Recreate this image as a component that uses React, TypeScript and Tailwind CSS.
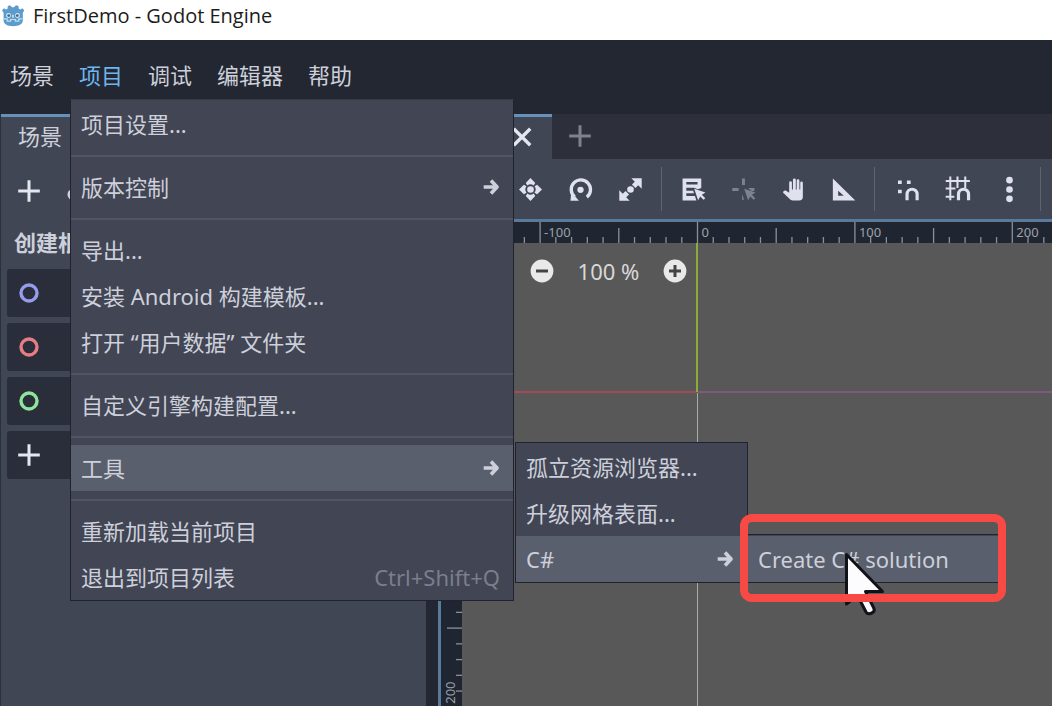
import { useEffect, useRef, useState } from "react";
import type { ReactNode } from "react";

type IconProps = { className?: string; children: ReactNode; box?: string };

function Icon({ className = "size-6", children, box = "0 0 16 16" }: IconProps) {
  return (
    <svg viewBox={box} className={`shrink-0 ${className}`} fill="currentColor" aria-hidden="true">
      {children}
    </svg>
  );
}

function PlusIcon({ className }: { className?: string }) {
  return (
    <Icon className={className}>
      <path d="M7 .8v6.2H.8v2H7v6.2h2V9h6.200V7H9V.8z" />
    </Icon>
  );
}

function ArrowIcon() {
  return (
    <Icon className="size-[18px]">
      <path
        d="M1.500 8H12M8 2.200 13.400 8 8 13.800"
        fill="none"
        stroke="currentColor"
        strokeWidth="3.200"
        strokeLinejoin="round"
      />
    </Icon>
  );
}

function GodotLogo() {
  return (
    <svg viewBox="0 0 24 24" className="size-6 shrink-0" aria-hidden="true">
      <path
        d="M9 1.200 11 3.200h2L15 1.200l2.500.9.3 2.600 1.600.8 2-1.200 1.900 2.200-1.500 2.300v7.700c0 3.800-4.300 5.700-9.600 5.700s-9.600-1.900-9.600-5.700V8.800L1 6.500l2-2.200 2 1.200 1.500-.8.3-2.600z"
        fill="#5b9ccc"
      />
      <path d="M2.800 14.800h3.400v2.400h3.400v-1.700h4.800v1.700h3.400v-2.400h3.400" fill="none" stroke="#c4deef" strokeWidth="1.200" />
      <circle cx="7.500" cy="11.500" r="2.400" fill="#dcebf5" />
      <circle cx="16.500" cy="11.500" r="2.400" fill="#dcebf5" />
      <circle cx="7.700" cy="11.600" r="1.400" fill="#47647d" />
      <circle cx="16.300" cy="11.600" r="1.400" fill="#47647d" />
      <path d="M12 10.800v3" stroke="#dcebf5" strokeWidth="1.400" />
    </svg>
  );
}

const moveHead = "M8 0 11.300 3.400 10.200 5.200Q8 3.500 5.800 5.200L4.700 3.400z";
const pointer = "m8.500 7.500 2.700 8 1.500-2.700 2.300 2.400 1.200-1.200-2.400-2.300 2.500-1.600z";
const magnet = (
  <path d="M6.300 15.500v-4.200a3.500 3.500 0 0 1 7 0v4.200" fill="none" stroke="currentColor" strokeWidth="2.200" />
);

const transformTools = [
  {
    label: "选择模式",
    art: <path d="M2 1v13l3.500-3.500L8 15l2-1-2.500-4.500H13z" />,
  },
  {
    label: "移动模式",
    art: (
      <>
        <circle cx="8" cy="8" r="2.300" />
        <path d={moveHead} />
        <path d={moveHead} transform="rotate(90 8 8)" />
        <path d={moveHead} transform="rotate(180 8 8)" />
        <path d={moveHead} transform="rotate(270 8 8)" />
      </>
    ),
  },
  {
    label: "旋转模式",
    art: (
      <>
        <circle cx="8" cy="8.200" r="2.200" />
        <path d="M4 13.200A6.700 6.700 0 1 1 12.400 13.300" fill="none" stroke="currentColor" strokeWidth="2.300" />
        <path d="M1 15.800 1.600 9.600 6.900 15.800z" />
      </>
    ),
  },
  {
    label: "缩放模式",
    art: (
      <>
        <circle cx="8" cy="8" r="2.300" />
        <path d="M8.600.2H15.800V7.400L13.400 5l-2 2L9 4.600l2-2z" />
        <path d="M7.400 15.800H.2V8.600L2.600 11l2-2L7 11.400l-2 2z" />
      </>
    ),
  },
];

const selectTools = [
  {
    label: "列表选择",
    art: (
      <>
        <path
          fillRule="evenodd"
          d="M.4.400H13.400V7L11 7.800 8.400 6.800H3v2h4.800l.5 1.800H3v2h6l1 3H.4zM3 2.800v1.800h7.800V2.800z"
        />
        <path d={pointer} />
      </>
    ),
  },
  {
    label: "轴心点",
    dim: true,
    art: (
      <>
        <path d="M7 .4h2v4.400H7zM.2 7h4.400v2H.2zM7 11.200l1.400 4H7zM11.200 7h4.400v2h-2z" />
        <path d={pointer} />
      </>
    ),
  },
  {
    label: "平移模式",
    art: (
      <path d="M5 3.200a.9.900 0 0 1 1.900 0V8h.7V1.300a1 1 0 0 1 2 0V8h.6V1.800a.9.900 0 0 1 1.900 0V8h.6V3.400a.9.900 0 0 1 1.800 0V13a2.600 2.600 0 0 1-2.600 2.600H7.600C5.500 15.600 3.300 12 .9 10.400c-.6-.9 1-2 2-1.500L5 10.200z" />
    ),
  },
  {
    label: "标尺模式",
    art: <path fillRule="evenodd" d="M.6.400v15.200h15.600zM4.300 8.800l3.900 3.600H4.300z" />,
  },
];

const snapTools = [
  {
    label: "智能吸附",
    art: (
      <>
        <path d="M0 1.800h2.600v2.400H0zM6.200 1.800h2.600v2.400H6.200zM0 8.200h2.600v2.400H0z" />
        {magnet}
      </>
    ),
  },
  {
    label: "栅格吸附",
    art: (
      <g transform="translate(-1 0)">
        <path
          d="M2.600-1v16.500M7.600-1v8M13-1v8M-.6 2.100h16.800M-.6 7.300h6.800M-.6 13h6"
          fill="none"
          stroke="currentColor"
          strokeWidth="1.400"
        />
        <g transform="translate(2 0)">{magnet}</g>
      </g>
    ),
  },
  {
    label: "吸附选项",
    art: (
      <>
        <circle cx="8" cy="1.500" r="2.300" />
        <circle cx="8" cy="8" r="2.300" />
        <circle cx="8" cy="14.500" r="2.300" />
      </>
    ),
  },
];

type Tool = { label: string; art: ReactNode; dim?: boolean };

function ToolGroup({ tools }: { tools: Tool[] }) {
  return (
    <div className="flex">
      {tools.map((t) => (
        <button
          key={t.label}
          type="button"
          aria-label={t.label}
          className={`flex h-12 w-[50px] items-center justify-center ${t.dim ? "text-[#7e8290]" : "text-[#dfe2ee]"}`}
        >
          <Icon className="size-[23px] overflow-visible">{t.art}</Icon>
        </button>
      ))}
    </div>
  );
}

function ToolSeparator() {
  return <span className="mx-[6px] h-11 w-px shrink-0 bg-[#606472]" />;
}

type Entry = {
  label: string;
  shortcut?: string;
  active?: boolean;
  submenu?: ReactNode;
  arrow?: boolean;
};

function MenuItem({ label, shortcut, active, submenu, arrow }: Entry) {
  return (
    <li className="relative">
      <button
        type="button"
        className={`flex h-[46px] w-full items-center justify-between pr-[13px] pl-[10px] text-left whitespace-nowrap ${
          active ? "bg-[#595f6c]" : ""
        }`}
      >
        <span>{label}</span>
        {shortcut && <span className="text-[#7b7f8b]">{shortcut}</span>}
        {arrow && <ArrowIcon />}
      </button>
      {submenu}
    </li>
  );
}

function Divider() {
  return (
    <li role="separator" className="flex h-[17px] items-center">
      <span className="h-[2px] w-full bg-[#505563]" />
    </li>
  );
}

const panel = "absolute border border-[#20232f] bg-[#414554] text-[#cdd0da]";

function CSharpMenu() {
  return (
    <ul className={`${panel} -top-[2px] left-full w-[254px] pt-px`}>
      <MenuItem label="Create C# solution" active />
    </ul>
  );
}

function ToolsMenu() {
  return (
    <ul className={`${panel} -top-[3px] left-full ml-[2px] w-[233px] pt-px`}>
      <MenuItem label="孤立资源浏览器..." />
      <MenuItem label="升级网格表面..." />
      <MenuItem label="C#" active arrow submenu={<CSharpMenu />} />
    </ul>
  );
}

function ProjectMenu() {
  return (
    <ul className={`${panel} top-[59px] left-[70px] z-10 w-[444px] border-t-[#353a47] pt-px`}>
      <MenuItem label="项目设置..." />
      <Divider />
      <MenuItem label="版本控制" arrow />
      <Divider />
      <MenuItem label="导出..." />
      <MenuItem label="安装 Android 构建模板..." />
      <MenuItem label="打开 “用户数据” 文件夹" />
      <Divider />
      <MenuItem label="自定义引擎构建配置..." />
      <Divider />
      <MenuItem label="工具" active arrow submenu={<ToolsMenu />} />
      <Divider />
      <MenuItem label="重新加载当前项目" />
      <MenuItem label="退出到项目列表" shortcut="Ctrl+Shift+Q" />
    </ul>
  );
}

const rootTypes = [
  { label: "2D 场景", ring: "#969cec" },
  { label: "3D 场景", ring: "#e77d84" },
  { label: "用户界面", ring: "#8fe39b" },
];

function SceneDock() {
  return (
    <aside className="flex w-[426px] shrink-0 flex-col border-l border-[#2b303c] bg-[#414655]">
      <div className="flex h-[45px] items-center border-t-[3px] border-[#6591ba] pb-1 pl-[17px] text-[#cdd0da]">
        场景
      </div>
      <div className="flex h-[64px] items-center gap-6 pl-[16px] text-[#e4e7f0]">
        <button type="button" aria-label="添加节点">
          <PlusIcon />
        </button>
        <button type="button" aria-label="实例化子场景" className="text-[#cdd0da]">
          <Icon>
            <path
              d="M7 5l2-2a3 3 0 0 1 4 4l-2 2M9 11l-2 2a3 3 0 0 1-4-4l2-2M6 10l4-4"
              fill="none"
              stroke="currentColor"
              strokeWidth="2"
            />
          </Icon>
        </button>
      </div>
      <h2 className="flex h-[46px] items-center pb-2 pl-[13px] font-bold text-[#cdd0da]">创建根节点：</h2>
      <div className="flex flex-col gap-[6px] px-[6px]">
        {rootTypes.map((t) => (
          <button
            key={t.label}
            type="button"
            aria-label={t.label}
            className="flex h-12 items-center rounded-[3px] bg-[#2a2e3a] pl-[10px]"
          >
            <Icon box="0 0 24 24">
              <circle cx="12" cy="12" r="8" fill="none" stroke={t.ring} strokeWidth="3.400" />
            </Icon>
          </button>
        ))}
        <button
          type="button"
          aria-label="其他节点"
          className="flex h-12 items-center rounded-[3px] bg-[#2a2e3a] pl-[10px] text-[#e4e7f0]"
        >
          <PlusIcon />
        </button>
      </div>
    </aside>
  );
}

const unit = 15.74;
const originX = 256.5;
const originY = 149;

function useExtent(axis: "width" | "height") {
  const ref = useRef<SVGSVGElement>(null);
  const [extent, setExtent] = useState(0);
  useEffect(() => {
    const node = ref.current;
    if (!node) return;
    const measure = () => setExtent(node.getBoundingClientRect()[axis]);
    measure();
    const observer = new ResizeObserver(measure);
    observer.observe(node);
    return () => observer.disconnect();
  }, [axis]);
  return [ref, extent] as const;
}

function ticksWithin(origin: number, extent: number) {
  const first = Math.ceil(-origin / unit);
  const last = Math.floor((extent - origin) / unit);
  return Array.from({ length: Math.max(0, last - first + 1) }, (_, i) => first + i);
}

function tickLength(n: number) {
  return n % 10 === 0 ? 21 : n % 5 === 0 ? 15 : 6;
}

function TopRuler() {
  const [ref, width] = useExtent("width");
  return (
    <svg ref={ref} className="h-[21px] w-full shrink-0 bg-[#202631]" aria-hidden="true">
      {ticksWithin(originX, width).map((n) => {
        const x = originX + n * unit;
        return (
          <g key={n}>
            <line x1={x} x2={x} y1={21 - tickLength(n)} y2={21} stroke="#8b909b" strokeWidth="1.300" />
            {n % 10 === 0 && (
              <text x={x + 4} y={15} fontSize={13} fill="#9da1aa">
                {n * 10}
              </text>
            )}
          </g>
        );
      })}
    </svg>
  );
}

function SideRuler() {
  const [ref, height] = useExtent("height");
  return (
    <svg ref={ref} className="h-full w-[21px] shrink-0 bg-[#202631]" aria-hidden="true">
      {ticksWithin(originY, height + unit).map((n) => {
        const y = originY + n * unit;
        return (
          <g key={n}>
            <line x1={21 - tickLength(n)} x2={21} y1={y} y2={y} stroke="#8b909b" strokeWidth="1.300" />
            {n % 10 === 0 && (
              <text transform={`translate(14 ${y - 3}) rotate(-90)`} fontSize={13} fill="#9da1aa">
                {n * 10}
              </text>
            )}
          </g>
        );
      })}
    </svg>
  );
}

function Viewport() {
  return (
    <div className="relative min-w-0 flex-1 bg-[#585858]">
      <svg className="absolute inset-0 size-full" aria-hidden="true">
        <rect x="0" y="148" width="235" height="2" fill="#a34a55" />
        <rect x="236" y="148" width="100%" height="2" fill="#80597f" />
        <rect x="234" y="0" width="2" height="149" fill="#89ad38" />
        <rect x="235" y="150" width="1" height="100%" fill="#a3aba3" />
      </svg>
      <div className="absolute top-[13px] left-[68px] flex items-center text-[#d8d8d8]">
        <button type="button" aria-label="缩小">
          <Icon box="0 0 24 24">
            <circle cx="12" cy="12" r="11.400" fill="#e9e9e9" />
            <path d="M6 12h12" stroke="#444" strokeWidth="3" />
          </Icon>
        </button>
        <button type="button" className="h-[30px] w-[109px] text-center">
          100 %
        </button>
        <button type="button" aria-label="放大">
          <Icon box="0 0 24 24">
            <circle cx="12" cy="12" r="11.400" fill="#e9e9e9" />
            <path d="M6 12h12M12 6v12" stroke="#444" strokeWidth="3" />
          </Icon>
        </button>
      </div>
    </div>
  );
}

function CanvasEditor() {
  return (
    <main className="flex min-w-0 flex-1 flex-col">
      <div className="flex h-[45px] shrink-0 bg-[#2d303b]">
        <div className="flex w-[114px] items-center justify-end border-t-[3px] border-[#6591ba] bg-[#414655] pr-[19px] pb-[3px] text-[#e4e7f0]">
          <button type="button" aria-label="关闭标签页">
            <Icon className="size-[22px]">
              <path d="m2 2 12 12M14 2 2 14" stroke="currentColor" strokeWidth="2.400" />
            </Icon>
          </button>
        </div>
        <button type="button" aria-label="新建场景" className="px-4 pb-px text-[#7f828c]">
          <PlusIcon />
        </button>
      </div>
      <div className="flex h-[60px] shrink-0 items-center overflow-hidden bg-[#414655] pl-[17px]">
        <ToolGroup tools={transformTools} />
        <ToolSeparator />
        <ToolGroup tools={selectTools} />
        <ToolSeparator />
        <div className="pl-[3px]">
          <ToolGroup tools={snapTools} />
        </div>
        <ToolSeparator />
      </div>
      <div className="flex min-h-0 flex-1 flex-col border-t-[3px] border-l-[3px] border-[#597a9b]">
        <TopRuler />
        <div className="flex min-h-0 flex-1">
          <SideRuler />
          <Viewport />
        </div>
      </div>
    </main>
  );
}

const menus = ["场景", "项目", "调试", "编辑器", "帮助"];

export default function App() {
  return (
    <div className="relative flex h-screen flex-col overflow-hidden bg-[#222731] font-['Noto_Sans','Noto_Sans_CJK_SC',sans-serif] text-[22px] leading-[30px]">
      <header className="flex h-10 shrink-0 items-center gap-[8px] bg-white pb-2 pl-[1px] text-[20px] text-[#1c1c1c]">
        <GodotLogo />
        <span className="font-['Open_Sans','Noto_Sans',sans-serif]">FirstDemo - Godot Engine</span>
      </header>
      <nav className="relative z-10 flex h-[74px] shrink-0 items-center gap-[25px] pb-1 pl-[10px] text-[#cdd0da]">
        {menus.map((m) => (
          <button key={m} type="button" className={m === "项目" ? "text-[#70b4ee]" : ""}>
            {m}
          </button>
        ))}
        <ProjectMenu />
      </nav>
      <div className="flex min-h-0 flex-1 gap-[12px]">
        <SceneDock />
        <CanvasEditor />
      </div>
      <svg viewBox="0 0 42 66" className="absolute top-[552px] left-[843px] z-20 h-[66px] w-[42px]" aria-hidden="true">
        <path
          d="M3.500 2.500v49.500l11-8.500 8.500 16.500c2 3.500 9.500 1 8-3.500L22.500 39.500H39.500z"
          fill="#fcfcfe"
          stroke="#111318"
          strokeWidth="3"
          strokeLinejoin="round"
        />
      </svg>
      <div className="pointer-events-none absolute top-[514px] left-[740px] z-30 h-[88px] w-[266px] rounded-[12px] border-8 border-[#f84a45]" />
    </div>
  );
}
